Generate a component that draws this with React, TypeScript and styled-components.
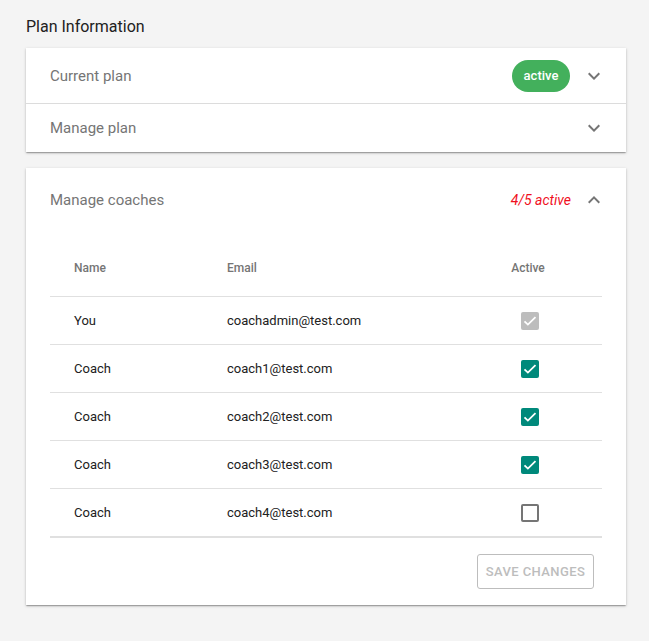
import React from "react";
import styled, { createGlobalStyle } from "styled-components";

const GlobalStyle = createGlobalStyle`
  html, body {
    margin: 0;
    padding: 0;
    background: #f4f4f4;
    font-family: Roboto, "Liberation Sans", Arial, sans-serif;
  }
`;

const Page = styled.div`
  padding: 17px 23px 36px 26px;
`;

const Title = styled.h2`
  margin: 0 0 11px;
  font-size: 16px;
  font-weight: 400;
  color: #212121;
  line-height: 20px;
`;

const Card = styled.div<{ $gap?: number }>`
  background: #fff;
  margin-bottom: ${(p) => p.$gap ?? 0}px;
  box-shadow: 0 1px 3px rgba(0, 0, 0, 0.2), 0 1px 1px rgba(0, 0, 0, 0.14),
    0 2px 1px -1px rgba(0, 0, 0, 0.12);
`;

const PanelHeader = styled.div<{ $height: number; $divider?: boolean }>`
  height: ${(p) => p.$height}px;
  display: flex;
  align-items: center;
  padding: 0 20px 0 24px;
  border-bottom: ${(p) => (p.$divider ? "1px solid #dcdcdc" : "none")};
`;

const PanelTitle = styled.div`
  flex: 1;
  font-size: 15px;
  color: #757575;
`;

const Badge = styled.span`
  display: inline-flex;
  align-items: center;
  justify-content: center;
  height: 32px;
  width: 58px;
  border-radius: 16px;
  background: #43b05c;
  color: #fff;
  font-size: 13px;
  font-weight: 500;
  margin-right: 12px;
`;

const CountLabel = styled.span`
  color: #f0101e;
  font-style: italic;
  font-size: 14px;
  margin-right: 11px;
`;

const Chevron = ({ up }: { up?: boolean }) => (
  <svg width="24" height="24" viewBox="0 0 24 24">
    <path
      d={up ? "M7.4 15.4 12 10.8l4.6 4.6L18 14l-6-6-6 6z" : "M7.4 8.6 12 13.2l4.6-4.6L18 10l-6 6-6-6z"}
      fill="#757575"
    />
  </svg>
);

const Body = styled.div`
  padding: 8px 24px 16px;
`;

const Table = styled.table`
  width: 100%;
  border-collapse: collapse;
  font-size: 13px;
`;

const Th = styled.th<{ $center?: boolean; $width?: string }>`
  height: 56px;
  padding: 0 24px;
  text-align: ${(p) => (p.$center ? "center" : "left")};
  width: ${(p) => p.$width ?? "auto"};
  font-size: 12px;
  font-weight: 500;
  color: #757575;
  border-bottom: 1px solid #e0e0e0;
`;

const Td = styled.td<{ $center?: boolean }>`
  height: 47px;
  padding: 0 24px;
  text-align: ${(p) => (p.$center ? "center" : "left")};
  color: #212121;
  border-bottom: 1px solid #e0e0e0;
  vertical-align: middle;
`;

const Box = styled.span<{ $state: "disabled" | "on" | "off" }>`
  display: inline-flex;
  align-items: center;
  justify-content: center;
  width: 18px;
  height: 18px;
  margin-left: 3px;
  box-sizing: border-box;
  border-radius: 2px;
  vertical-align: middle;
  background: ${(p) =>
    p.$state === "on" ? "#00897b" : p.$state === "disabled" ? "#bdbdbd" : "transparent"};
  border: ${(p) => (p.$state === "off" ? "2px solid #757575" : "none")};
`;

const Checkbox = ({ state }: { state: "disabled" | "on" | "off" }) => (
  <Box $state={state}>
    {state !== "off" && (
      <svg width="18" height="18" viewBox="0 0 18 18">
        <path d="M3.5 9.3l3.4 3.3 7.6-7.4" fill="none" stroke="#fff" strokeWidth="1.8" />
      </svg>
    )}
  </Box>
);

const Footer = styled.div`
  display: flex;
  justify-content: flex-end;
  padding: 16px 8px 0 0;
  border-top: 1px solid #e0e0e0;
`;

const SaveButton = styled.button`
  height: 35px;
  width: 117px;
  background: #fff;
  border: 1px solid #bdbdbd;
  border-radius: 3px;
  color: #bdbdbd;
  font-family: inherit;
  font-size: 13px;
  font-weight: 500;
  letter-spacing: 0.4px;
  text-transform: uppercase;
`;

const coaches: { name: string; email: string; state: "disabled" | "on" | "off" }[] = [
  { name: "You", email: "coachadmin@test.com", state: "disabled" },
  { name: "Coach", email: "coach1@test.com", state: "on" },
  { name: "Coach", email: "coach2@test.com", state: "on" },
  { name: "Coach", email: "coach3@test.com", state: "on" },
  { name: "Coach", email: "coach4@test.com", state: "off" },
];

export default function App() {
  return (
    <>
      <GlobalStyle />
      <Page>
        <Title>Plan Information</Title>
        <Card $gap={16}>
          <PanelHeader $height={55} $divider>
            <PanelTitle>Current plan</PanelTitle>
            <Badge>active</Badge>
            <Chevron />
          </PanelHeader>
          <PanelHeader $height={48}>
            <PanelTitle>Manage plan</PanelTitle>
            <Chevron />
          </PanelHeader>
        </Card>
        <Card>
          <PanelHeader $height={64}>
            <PanelTitle>Manage coaches</PanelTitle>
            <CountLabel>4/5 active</CountLabel>
            <Chevron up />
          </PanelHeader>
          <Body>
            <Table>
              <thead>
                <tr>
                  <Th $width="105px">Name</Th>
                  <Th>Email</Th>
                  <Th $center $width="100px">Active</Th>
                </tr>
              </thead>
              <tbody>
                {coaches.map((c, i) => (
                  <tr key={i}>
                    <Td>{c.name}</Td>
                    <Td>{c.email}</Td>
                    <Td $center>
                      <Checkbox state={c.state} />
                    </Td>
                  </tr>
                ))}
              </tbody>
            </Table>
            <Footer>
              <SaveButton>Save changes</SaveButton>
            </Footer>
          </Body>
        </Card>
      </Page>
    </>
  );
}
